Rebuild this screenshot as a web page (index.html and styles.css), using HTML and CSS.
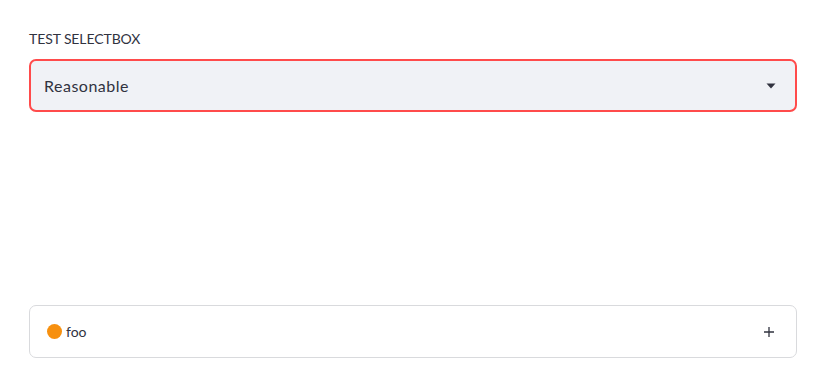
FILE: index.html
```html
<!DOCTYPE html>
<html>
<head>
<meta charset="utf-8">
<link rel="stylesheet" href="styles.css">
</head>
<body>
<main class="page">
  <div class="field">
    <label class="label">TEST SELECTBOX</label>
    <div class="select">
      <span class="value">Reasonable</span>
      <svg class="caret" width="10" height="6" viewBox="0 0 10 6"><path d="M0.5 0.5h9L5 5.5z" fill="#31333f"/></svg>
    </div>
  </div>
  <div class="spacer"></div>
  <div class="expander">
    <div class="exp-title">
      <span class="dot"></span>
      <span class="exp-text">foo</span>
    </div>
    <svg class="plus" width="12" height="12" viewBox="0 0 12 12"><path d="M6 1v10M1 6h10" stroke="#31333f" stroke-width="1.3"/></svg>
  </div>
</main>
</body>
</html>
```
FILE: styles.css
```css
html, body {
  margin: 0;
  padding: 0;
  background: #ffffff;
}
body {
  font-family: "Source Sans Pro", "Lato", "Noto Sans", sans-serif;
  color: #31333f;
}
.page {
  width: 768px;
  padding: 30px 29px 0;
  display: flex;
  flex-direction: column;
}
.field {
  display: flex;
  flex-direction: column;
  gap: 11px;
}
.label {
  font-size: 14px;
  line-height: 18px;
  color: #31333f;
  letter-spacing: -0.1px;
}
.select {
  box-sizing: border-box;
  height: 53px;
  border: 2px solid #ff4b4b;
  border-radius: 7px;
  background: #f0f2f6;
  display: flex;
  align-items: center;
  justify-content: space-between;
  padding: 0 19px 0 13px;
}
.value {
  font-size: 16px;
  letter-spacing: 0.5px;
}
.caret {
  display: block;
}
.spacer {
  height: 192px;
}
.expander {
  box-sizing: border-box;
  height: 53px;
  margin-top: 1px;
  border: 1px solid #d9dadd;
  border-radius: 7px;
  display: flex;
  align-items: center;
  justify-content: space-between;
  padding: 0 21px 0 17px;
}
.exp-title {
  display: flex;
  align-items: center;
  gap: 4px;
}
.dot {
  width: 15px;
  height: 15px;
  border-radius: 50%;
  background: #f7900f;
}
.exp-text {
  font-size: 14px;
}
.plus {
  display: block;
}
```
